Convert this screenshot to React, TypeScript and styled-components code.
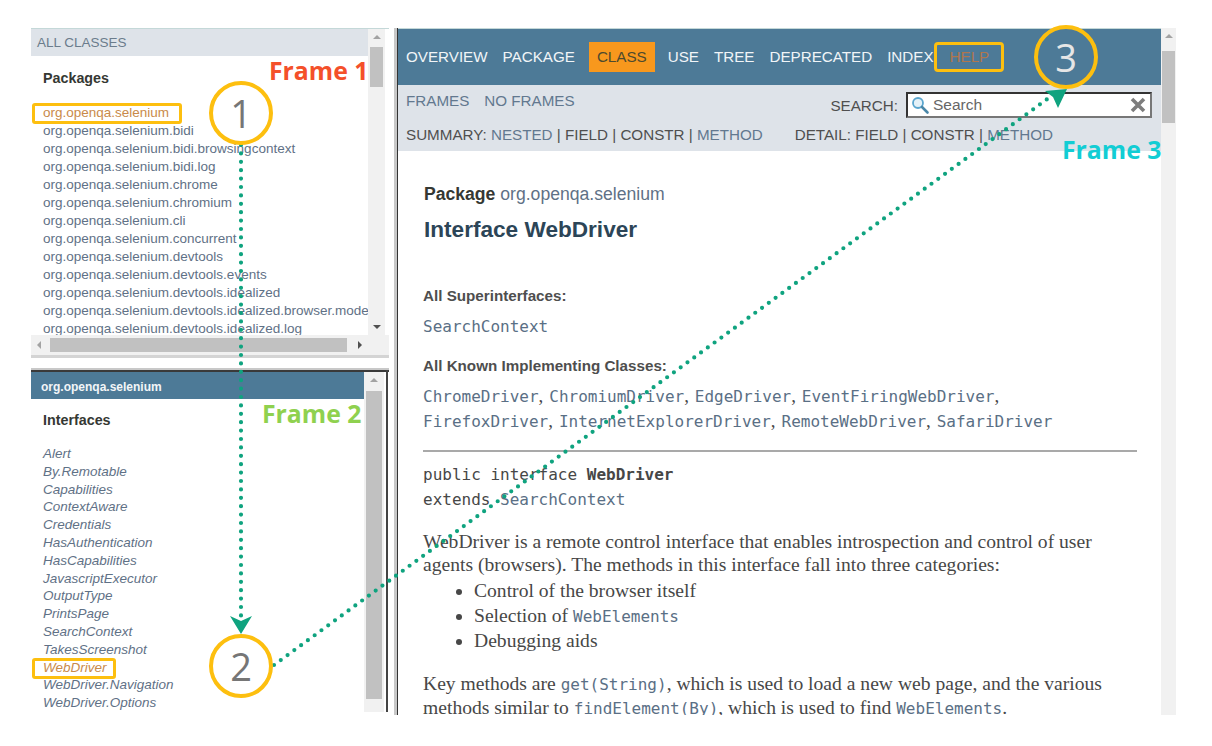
import { FC } from "react";
import styled, { createGlobalStyle } from "styled-components";

const packages = [
    "org.openqa.selenium",
    "org.openqa.selenium.bidi",
    "org.openqa.selenium.bidi.browsingcontext",
    "org.openqa.selenium.bidi.log",
    "org.openqa.selenium.chrome",
    "org.openqa.selenium.chromium",
    "org.openqa.selenium.cli",
    "org.openqa.selenium.concurrent",
    "org.openqa.selenium.devtools",
    "org.openqa.selenium.devtools.events",
    "org.openqa.selenium.devtools.idealized",
    "org.openqa.selenium.devtools.idealized.browser.model",
    "org.openqa.selenium.devtools.idealized.log",
];

const interfaces = [
    "Alert",
    "By.Remotable",
    "Capabilities",
    "ContextAware",
    "Credentials",
    "HasAuthentication",
    "HasCapabilities",
    "JavascriptExecutor",
    "OutputType",
    "PrintsPage",
    "SearchContext",
    "TakesScreenshot",
    "WebDriver",
    "WebDriver.Navigation",
    "WebDriver.Options",
];

const navItems = ["OVERVIEW", "PACKAGE", "CLASS", "USE", "TREE", "DEPRECATED", "INDEX", "HELP"];

const App: FC = () => {
    return (
        <Canvas>
            <GlobalStyle />
            <LeftColumn>
                <PackagesFrame>
                    <FrameBody>
                        <FrameContent>
                            <AllClasses>ALL CLASSES</AllClasses>
                            <FrameHeading>Packages</FrameHeading>
                            <PackageList>
                                {packages.map((name, i) => (
                                    <ListItem key={name} $active={i === 0}>{name}</ListItem>
                                ))}
                            </PackageList>
                        </FrameContent>
                        <VTrack $width={17}>
                            <ArrowUp />
                            <VThumb $height={40} $top={8} $inset={2} />
                            <VSpacer />
                            <ArrowDown />
                        </VTrack>
                    </FrameBody>
                    <HTrack>
                        <ArrowLeft />
                        <HThumb />
                        <ArrowRight />
                    </HTrack>
                </PackagesFrame>

                <ClassesFrame>
                    <FrameContent>
                        <PackageBar>org.openqa.selenium</PackageBar>
                        <FrameHeading $top={12}>Interfaces</FrameHeading>
                        <InterfaceList>
                            {interfaces.map((name) => (
                                <ListItem key={name} $active={name === "WebDriver"} $narrow>{name}</ListItem>
                            ))}
                        </InterfaceList>
                    </FrameContent>
                    <VTrack $width={20}>
                        <ArrowUp />
                        <VThumb $height={308} $top={9} $inset={2} />
                    </VTrack>
                </ClassesFrame>
            </LeftColumn>

            <RightFrame>
                <RightBody>
                    <NavBar>
                        {navItems.map((item) => (
                            <NavItem key={item} $current={item === "CLASS"} $help={item === "HELP"}>{item}</NavItem>
                        ))}
                    </NavBar>
                    <SubBar>
                        <SubRow>
                            <SubLinks>
                                <SubLink>FRAMES</SubLink>
                                <SubLink>NO FRAMES</SubLink>
                            </SubLinks>
                            <SearchGroup>
                                <SearchLabel>SEARCH:</SearchLabel>
                                <SearchBox>
                                    <svg width="20" height="20" viewBox="0 0 20 20">
                                        <circle cx="8" cy="8" r="5" fill="#e4f1f8" stroke="#5aa6cf" strokeWidth="1.8" />
                                        <line x1="12" y1="12" x2="17.5" y2="17.5" stroke="#4a87a8" strokeWidth="2.6" strokeLinecap="round" />
                                    </svg>
                                    <SearchText>Search</SearchText>
                                    <svg width="16" height="16" viewBox="0 0 16 16">
                                        <path d="M2 2 L14 14 M14 2 L2 14" stroke="#7d7d7d" strokeWidth="3.6" />
                                    </svg>
                                </SearchBox>
                            </SearchGroup>
                        </SubRow>
                        <SummaryRow>
                            <span>
                                SUMMARY: <SubLink>NESTED</SubLink> | FIELD | CONSTR | <SubLink>METHOD</SubLink>
                            </span>
                            <span>
                                DETAIL: FIELD | CONSTR | <SubLink>METHOD</SubLink>
                            </span>
                        </SummaryRow>
                    </SubBar>
                    <Doc>
                        <PackageLine><b>Package</b> <DocLink>org.openqa.selenium</DocLink></PackageLine>
                        <Title>Interface WebDriver</Title>
                        <DefLabel $top={43}>All Superinterfaces:</DefLabel>
                        <CodeLine $height={25} $top={8}>SearchContext</CodeLine>
                        <DefLabel $top={17}>All Known Implementing Classes:</DefLabel>
                        <CodeLine $height={25} $top={7}>
                            ChromeDriver<Comma>, </Comma>ChromiumDriver<Comma>, </Comma>EdgeDriver<Comma>, </Comma>EventFiringWebDriver<Comma>,</Comma>
                        </CodeLine>
                        <CodeLine $height={25}>
                            FirefoxDriver<Comma>, </Comma>InternetExplorerDriver<Comma>, </Comma>RemoteWebDriver<Comma>, </Comma>SafariDriver
                        </CodeLine>
                        <Rule />
                        <Signature>public interface <b>WebDriver</b></Signature>
                        <Signature>extends <DocCode>SearchContext</DocCode></Signature>
                        <Para $top={18}>
                            WebDriver is a remote control interface that enables introspection and control of user<br />
                            agents (browsers). The methods in this interface fall into three categories:
                        </Para>
                        <Bullets>
                            <li>Control of the browser itself</li>
                            <li>Selection of <DocCode>WebElements</DocCode></li>
                            <li>Debugging aids</li>
                        </Bullets>
                        <Para $top={18}>
                            Key methods are <DocCode>get(String)</DocCode>, which is used to load a new web page, and the various<br />
                            methods similar to <DocCode>findElement(By)</DocCode>, which is used to find <DocCode>WebElements</DocCode>.
                        </Para>
                    </Doc>
                </RightBody>
                <VTrack $width={15}>
                    <ArrowUp />
                    <VThumb $height={72} $top={13} $inset={1} />
                </VTrack>
            </RightFrame>

            {/* annotations drawn on top of the screenshot */}
            <Arrows width="1212" height="746" viewBox="0 0 1212 746">
                <line x1="241" y1="145" x2="241" y2="618" stroke="#0fa37f" strokeWidth="4.2" strokeLinecap="round" strokeDasharray="0 8.4" />
                <polygon points="230,616 241,621 252,616 241,634" fill="#0fa37f" />
                <line x1="274" y1="665" x2="1050" y2="97" stroke="#0fa37f" strokeWidth="4.2" strokeLinecap="round" strokeDasharray="0 8.4" />
                <polygon points="1067,89 1045,91 1053,97 1058,108" fill="#0fa37f" />
            </Arrows>
            <Step $x={241} $y={113}>1</Step>
            <Step $x={241} $y={666}>2</Step>
            <Step $x={1066} $y={57} $light>3</Step>
            <FrameTag $x={269} $y={55} $color="#f4502a">Frame 1</FrameTag>
            <FrameTag $x={262} $y={398} $color="#8fd14f">Frame 2</FrameTag>
            <FrameTag $x={1062} $y={134} $color="#12cdd4">Frame 3</FrameTag>
        </Canvas>
    );
};

export default App;

const GlobalStyle = createGlobalStyle`
    html, body {
        margin: 0;
        background: #fff;
    }
    body {
        font-family: "Liberation Sans", Arial, sans-serif;
        color: #353833;
    }
`;

const Canvas = styled.div`
    position: relative;
    width: 1212px;
    height: 746px;
    overflow: hidden;
    box-sizing: border-box;
    padding: 28px 0 0 31px;
    display: flex;
    align-items: flex-start;
`;

const LeftColumn = styled.div`
    width: 358px;
    height: 684px;
    display: flex;
    flex-direction: column;
    gap: 12px;
`;

const PackagesFrame = styled.div`
    height: 330px;
    display: flex;
    flex-direction: column;
    border-top: 1px solid #c4d8d8;
    border-bottom: 3px solid #d4d4d4;
    box-sizing: border-box;
`;

const FrameBody = styled.div`
    flex: 1;
    min-height: 0;
    display: flex;
    padding-right: 4px;
`;

const FrameContent = styled.div`
    flex: 1;
    min-width: 0;
    overflow: hidden;
`;

const AllClasses = styled.div`
    height: 27px;
    line-height: 27px;
    padding-left: 6px;
    background: #dee3e9;
    color: #6b7c8c;
    font-size: 13.5px;
`;

const FrameHeading = styled.div<{ $top?: number }>`
    margin: ${(p) => p.$top ?? 13}px 0 0 12px;
    height: 18px;
    line-height: 18px;
    font-size: 14.3px;
    font-weight: bold;
    color: #353833;
`;

const PackageList = styled.div`
    margin-top: 17px;
`;

const InterfaceList = styled.div`
    margin-top: 16px;
    font-style: italic;
`;

const ListItem = styled.div<{ $active?: boolean; $narrow?: boolean }>`
    position: relative;
    margin-left: 12px;
    height: ${(p) => (p.$narrow ? 17.8 : 18)}px;
    line-height: ${(p) => (p.$narrow ? 17.8 : 18)}px;
    font-size: 13.5px;
    white-space: nowrap;
    color: ${(p) => (p.$active ? "#c98a4a" : "#5f7186")};

    ${(p) =>
        p.$active &&
        `
        &::after {
            content: "";
            position: absolute;
            left: -11px;
            top: -1px;
            width: ${p.$narrow ? 84 : 150}px;
            height: 21px;
            box-sizing: border-box;
            border: 3px solid #fdbf0f;
            border-radius: 3px;
        }
    `}
`;

const PackageBar = styled.div`
    height: 27px;
    line-height: 31px;
    padding-left: 10px;
    background: #4d7a97;
    color: #f2f5f7;
    font-size: 12px;
    font-weight: bold;
`;

const ClassesFrame = styled.div`
    height: 342px;
    display: flex;
    box-sizing: border-box;
    border-top: 2px solid #3a3a3a;
    box-shadow: 0 -2px 0 #c8c8c8;
    padding-right: 5px;
    position: relative;

    &::after {
        content: "";
        position: absolute;
        right: 1px;
        top: -2px;
        bottom: 0;
        width: 2px;
        background: #444;
    }
`;

const VTrack = styled.div<{ $width: number }>`
    flex: none;
    width: ${(p) => p.$width}px;
    background: #f1f1f1;
    display: flex;
    flex-direction: column;
    align-items: stretch;
`;

const VThumb = styled.div<{ $height: number; $top: number; $inset: number }>`
    height: ${(p) => p.$height}px;
    margin: ${(p) => p.$top}px ${(p) => p.$inset}px 0;
    background: #c1c1c1;
    flex: none;
`;

const VSpacer = styled.div`
    flex: 1;
`;

const ArrowUp = styled.div`
    flex: none;
    width: 0;
    height: 0;
    margin: 6px auto 0;
    border-left: 4px solid transparent;
    border-right: 4px solid transparent;
    border-bottom: 4px solid #a3a3a3;
`;

const ArrowDown = styled.div`
    flex: none;
    width: 0;
    height: 0;
    margin: 0 auto 6px;
    border-left: 4px solid transparent;
    border-right: 4px solid transparent;
    border-top: 4px solid #505050;
`;

const HTrack = styled.div`
    flex: none;
    height: 20px;
    background: #f1f1f1;
    display: flex;
    align-items: center;
    padding: 0 27px 0 6px;
`;

const HThumb = styled.div`
    flex: 1;
    height: 14px;
    margin: 0 11px 0 9px;
    background: #c1c1c1;
`;

const ArrowLeft = styled.div`
    width: 0;
    height: 0;
    border-top: 4px solid transparent;
    border-bottom: 4px solid transparent;
    border-right: 4px solid #a3a3a3;
`;

const ArrowRight = styled.div`
    width: 0;
    height: 0;
    border-top: 4px solid transparent;
    border-bottom: 4px solid transparent;
    border-left: 4px solid #505050;
`;

const RightFrame = styled.div`
    width: 778px;
    height: 687px;
    margin-left: 8px;
    display: flex;
    border-left: 1px solid #333;
    box-shadow: -3px 0 0 #c8c8c8;
`;

const RightBody = styled.div`
    flex: 1;
    min-width: 0;
    overflow: hidden;
`;

const NavBar = styled.div`
    height: 57px;
    background: #4d7a97;
    border-top: 1px solid #c4d8d8;
    box-sizing: border-box;
    display: flex;
    align-items: center;
    gap: 15px;
    padding-left: 8px;
    font-size: 15.2px;
`;

const NavItem = styled.div<{ $current?: boolean; $help?: boolean }>`
    position: relative;
    white-space: nowrap;
    margin-bottom: ${(p) => (p.$current ? 0 : 2)}px;
    color: ${(p) => (p.$help ? "#b0764d" : p.$current ? "#4d4a2e" : "#f1f5f8")};
    ${(p) =>
        p.$current &&
        `
        background: #f8981d;
        height: 30px;
        line-height: 30px;
        padding: 0 8px;
        margin: 0 -2px 0 -1px;
    `}
    ${(p) =>
        p.$help &&
        `
        margin-left: 1px;
        &::after {
            content: "";
            position: absolute;
            left: -16px;
            top: -6px;
            width: 70px;
            height: 30px;
            box-sizing: border-box;
            border: 3px solid #fdbf0f;
            border-radius: 4px;
        }
    `}
`;

const SubBar = styled.div`
    height: 66px;
    background: #dee3e9;
    padding: 0 8px;
    font-size: 15.2px;
    color: #4f4f4f;
`;

const SubRow = styled.div`
    height: 38px;
    display: flex;
    justify-content: space-between;
    padding-right: 1px;
`;

const SubLinks = styled.div`
    display: flex;
    gap: 15px;
    padding-top: 7px;
`;

const SubLink = styled.span`
    color: #62788f;
`;

const SearchGroup = styled.div`
    display: flex;
    align-items: flex-start;
    gap: 8px;
    padding-top: 7px;
`;

const SearchLabel = styled.span`
    padding-top: 5px;
`;

const SearchBox = styled.div`
    width: 246px;
    height: 26px;
    box-sizing: border-box;
    background: #fff;
    border: 2px solid #333;
    border-bottom-color: #777;
    border-right-color: #777;
    display: flex;
    align-items: center;
    gap: 3px;
    padding: 0 4px 0 2px;
`;

const SearchText = styled.span`
    flex: 1;
    font-size: 15.5px;
    color: #666;
`;

const SummaryRow = styled.div`
    display: flex;
    gap: 32px;
    line-height: 24px;
`;

const Doc = styled.div`
    padding: 31px 25px 0;
    width: 714px;
`;

const PackageLine = styled.div`
    height: 24px;
    line-height: 24px;
    margin-left: 1px;
    font-size: 17.6px;
    color: #353833;
`;

const DocLink = styled.span`
    color: #5f7186;
`;

const Title = styled.h1`
    margin: 0 0 0 1px;
    padding-top: 11px;
    height: 26px;
    line-height: 26px;
    font-size: 22.6px;
    font-weight: bold;
    color: #2c4557;
`;

const DefLabel = styled.div<{ $top: number }>`
    margin-top: ${(p) => p.$top}px;
    height: 20px;
    line-height: 20px;
    font-size: 15.2px;
    font-weight: bold;
    color: #4e4e4e;
`;

const CodeLine = styled.div<{ $height: number; $top?: number }>`
    margin-top: ${(p) => p.$top ?? 0}px;
    height: ${(p) => p.$height}px;
    line-height: ${(p) => p.$height}px;
    font-family: "DejaVu Sans Mono", monospace;
    font-size: 16px;
    color: #5a6f85;
    white-space: nowrap;
`;

const Comma = styled.span`
    font-family: "Liberation Serif", serif;
    font-size: 19px;
    margin-right: 1.2px;
    color: #474747;
`;

const Rule = styled.hr`
    margin: 17px 0 10px;
    border: 0;
    border-top: 2px solid #a9a9a9;
`;

const Signature = styled.div`
    height: 25px;
    line-height: 25px;
    font-family: "DejaVu Sans Mono", monospace;
    font-size: 16px;
    color: #474747;
    white-space: nowrap;
`;

const DocCode = styled.span`
    font-family: "DejaVu Sans Mono", monospace;
    font-size: 16px;
    color: #5a6f85;
`;

const Para = styled.div<{ $top: number }>`
    margin-top: ${(p) => p.$top}px;
    line-height: 23px;
    font-family: "Liberation Serif", serif;
    font-size: 19.6px;
    color: #474747;
    white-space: nowrap;
`;

const Bullets = styled.ul`
    margin: 3px 0 0;
    padding-left: 51px;
    line-height: 24.5px;
    font-family: "Liberation Serif", serif;
    font-size: 19.6px;
    color: #474747;
`;

const Arrows = styled.svg`
    position: absolute;
    left: 0;
    top: 0;
    pointer-events: none;
`;

const Step = styled.div<{ $x: number; $y: number; $light?: boolean }>`
    position: absolute;
    left: ${(p) => p.$x - 32}px;
    top: ${(p) => p.$y - 32}px;
    width: 64px;
    height: 64px;
    box-sizing: border-box;
    border: 4px solid #fdbf0f;
    border-radius: 50%;
    display: flex;
    align-items: center;
    justify-content: center;
    font-family: "Open Sans", sans-serif;
    font-size: 38px;
    color: ${(p) => (p.$light ? "#e6e6e6" : "#767676")};
`;

const FrameTag = styled.div<{ $x: number; $y: number; $color: string }>`
    position: absolute;
    left: ${(p) => p.$x}px;
    top: ${(p) => p.$y}px;
    font-family: "Open Sans", sans-serif;
    font-size: 24.8px;
    line-height: 30px;
    font-weight: 700;
    color: ${(p) => p.$color};
    white-space: nowrap;
`;
